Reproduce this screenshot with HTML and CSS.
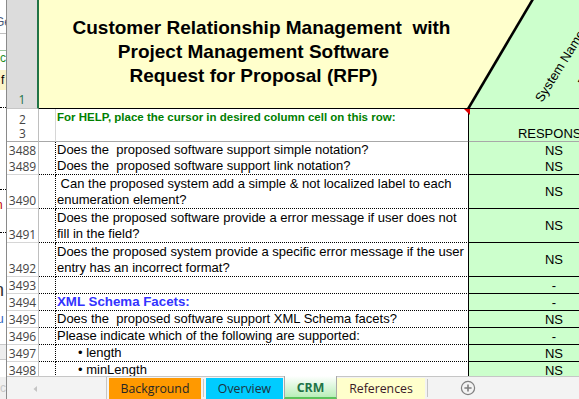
FILE: index.html
```html
<!DOCTYPE html>
<html>
<head>
<meta charset="utf-8">
<title>CRM RFP</title>
<link rel="stylesheet" href="styles.css">
</head>
<body>
<div class="app">
  <div class="strip">
    <div class="s s-a"></div>
    <div class="s s-b">Ge</div>
    <div class="s s-c"></div>
    <div class="s s-d"></div>
    <div class="s s-e">c</div>
    <div class="s s-f"></div>
    <div class="s s-g">f</div>
    <div class="s s-h"></div>
    <div class="s s-i"></div>
    <div class="s s-j"></div>
    <div class="s s-k">n</div>
    <div class="s s-l"></div>
    <div class="s s-m"></div>
    <div class="s s-n">n</div>
    <div class="s s-o"></div>
    <div class="s s-p">u</div>
    <div class="s s-q"></div>
    <div class="s s-r"></div>
    <div class="s s-s"></div>
    <div class="s s-t">c</div>
  </div>
  <div class="main">
    <div class="sheet">
      <div class="row r1">
        <div class="rh sel">1</div>
        <div class="title-cell">
          <svg class="diag" width="600" height="108" viewBox="0 0 600 108">
            <polygon points="0,0 493,0 429,108 0,108" fill="#ffffcc"/>
            <polygon points="493,0 600,0 600,108 429,108" fill="#ccffcc"/>
            <line x1="429" y1="109" x2="494" y2="-1" stroke="#000" stroke-width="2.6"/>
          </svg>
          <div class="title">
            <div class="t1">Customer Relationship Management&nbsp; with</div>
            <div>Project Management Software</div>
            <div>Request for Proposal (RFP)</div>
          </div>
          <div class="rot">
            <div>System Name</div>
            <div class="rot2">Product</div>
          </div>
        </div>
      </div>

      <div class="row r2">
        <div class="rh">2</div>
        <div class="ca"></div>
        <div class="cb help">For HELP, place the cursor in desired column cell on this row:<span class="cmt"></span></div>
        <div class="cc"></div>
      </div>

      <div class="row r3">
        <div class="rh">3</div>
        <div class="ca"></div>
        <div class="cb"></div>
        <div class="cc">RESPONSE</div>
      </div>

      <div class="row q h16">
        <div class="rh">3488</div>
        <div class="ca"></div>
        <div class="cb">Does the&nbsp; proposed software support simple notation?</div>
        <div class="cc">NS</div>
      </div>

      <div class="row q h17">
        <div class="rh">3489</div>
        <div class="ca"></div>
        <div class="cb">Does the&nbsp; proposed software support link notation?</div>
        <div class="cc">NS</div>
      </div>

      <div class="row q h34">
        <div class="rh">3490</div>
        <div class="ca"></div>
        <div class="cb">&nbsp;Can the proposed system add a simple &amp; not localized label to each<br>enumeration element?</div>
        <div class="cc">NS</div>
      </div>

      <div class="row q h34">
        <div class="rh">3491</div>
        <div class="ca"></div>
        <div class="cb">Does the proposed software provide a error message if user does not<br>fill in the field?</div>
        <div class="cc">NS</div>
      </div>

      <div class="row q h34">
        <div class="rh">3492</div>
        <div class="ca"></div>
        <div class="cb">Does the proposed system provide a specific error message if the user<br>entry has an incorrect format?</div>
        <div class="cc">NS</div>
      </div>

      <div class="row q h17">
        <div class="rh">3493</div>
        <div class="ca"></div>
        <div class="cb"></div>
        <div class="cc">-</div>
      </div>

      <div class="row q h17">
        <div class="rh">3494</div>
        <div class="ca"></div>
        <div class="cb facet">XML Schema Facets:</div>
        <div class="cc">-</div>
      </div>

      <div class="row q h17">
        <div class="rh">3495</div>
        <div class="ca"></div>
        <div class="cb">Does the&nbsp; proposed software support XML Schema facets?</div>
        <div class="cc">NS</div>
      </div>

      <div class="row q h17">
        <div class="rh">3496</div>
        <div class="ca"></div>
        <div class="cb">Please indicate which of the following are supported:</div>
        <div class="cc">-</div>
      </div>

      <div class="row q h17">
        <div class="rh">3497</div>
        <div class="ca"></div>
        <div class="cb bullet">• length</div>
        <div class="cc">NS</div>
      </div>

      <div class="row q h17">
        <div class="rh">3498</div>
        <div class="ca"></div>
        <div class="cb bullet">• minLength</div>
        <div class="cc">NS</div>
      </div>
    </div>

    <div class="tabbar">
      <div class="nav">
        <svg width="99" height="22" viewBox="0 0 99 22"><polygon points="30,9 30,15 26.5,12" fill="#c4c4c4"/></svg>
      </div>
      <div class="tabs">
        <div class="tab t-bg">Background</div>
        <span class="sep"></span>
        <div class="tab t-ov">Overview</div>
        <div class="tab t-crm">CRM</div>
        <div class="tab t-ref">References</div>
        <span class="sep sep2"></span>
      </div>
      <div class="add">
        <svg width="16" height="16" viewBox="0 0 16 16">
          <circle cx="8" cy="8" r="6.6" fill="none" stroke="#7f7f7f" stroke-width="1.2"/>
          <path d="M8 4.4 V11.6 M4.4 8 H11.6" stroke="#7f7f7f" stroke-width="1.6"/>
        </svg>
      </div>
    </div>
  </div>
</div>
</body>
</html>
```

FILE: styles.css
```css
* { box-sizing: border-box; }
html, body { margin: 0; padding: 0; }
body {
  width: 579px;
  height: 399px;
  overflow: hidden;
  background: #fff;
  font-family: "Liberation Sans", Arial, sans-serif;
  color: #000;
}
.app { display: flex; height: 399px; }

/* left strip: other window behind */
.strip {
  width: 7px;
  flex: none;
  border-right: 1px solid #8a8a8a;
  overflow: hidden;
  display: flex;
  flex-direction: column;
  font-family: "Liberation Sans", Arial, sans-serif;
  font-size: 12px;
  line-height: 12px;
  white-space: nowrap;
}
.s { flex: none; }
.s-a { height: 16px; }
.s-b { height: 12px; color: #45577a; margin-left: -5px; }
.s-c { height: 6px; border-bottom: 1px solid #c0c0c0; }
.s-d { height: 17px; border-bottom: 1px solid #9cc89c; }
.s-e { height: 15px; color: #1f8f1f; line-height: 15px; }
.s-f { height: 4px; }
.s-g { height: 20px; background: #fbf3c8; line-height: 20px; padding-left: 1px; }
.s-h { height: 18px; border-bottom: 1px dotted #000; }
.s-i { height: 82px; border-bottom: 1px dotted #000; }
.s-j { height: 8px; }
.s-k { height: 14px; color: #c00000; margin-left: -4px; line-height: 14px; }
.s-l { height: 21px; border-bottom: 1px dotted #000; }
.s-m { height: 48px; }
.s-n { height: 18px; font-size: 18px; line-height: 18px; color: #333; margin-left: -6px; }
.s-o { height: 13px; }
.s-p { height: 14px; color: #2a5fc0; line-height: 14px; margin-left: -3px; }
.s-q { height: 19px; border-bottom: 1px solid #c8c8c8; }
.s-r { height: 15px; background: #eeeeee; border-bottom: 1px solid #c8c8c8; }
.s-s { height: 17px; }
.s-t { height: 22px; background: #f0f0f0; color: #c8c8c8; line-height: 22px; }

.main {
  flex: 1;
  min-width: 0;
  display: flex;
  flex-direction: column;
  overflow: hidden;
}
.sheet {
  height: 376px;
  flex: none;
  overflow: hidden;
}

.row {
  display: grid;
  grid-template-columns: 32px 17px 413px 170px;
}
.r1 { grid-template-columns: 32px 600px; height: 109px; }
.r2 { height: 17px; }
.r3 { height: 16px; }
.h16 { height: 16px; }
.h17 { height: 17px; }
.h34 { height: 34px; }

.rh {
  border-right: 1px solid #bfbfbf;
  border-bottom: 1px solid #d6d6d6;
  background: #fff;
  font-family: "Open Sans", "Noto Sans", sans-serif;
  font-size: 12px;
  line-height: 14px;
  color: #444;
  display: flex;
  align-items: flex-end;
  justify-content: center;
  overflow: hidden;
}
.rh.sel {
  background: #dcdcdc;
  color: #217346;
  border-right: 2px solid #217346;
  border-bottom: 1px solid #c6c6c6;
  padding-bottom: 1px;
}

.title-cell {
  position: relative;
  height: 109px;
  border-bottom: 1px solid #000;
  overflow: hidden;
}
.diag { position: absolute; left: 0; top: 0; }
.title {
  position: relative;
  width: 429px;
  padding-top: 16px;
  text-align: center;
  font-weight: bold;
  font-size: 19px;
  line-height: 24px;
  white-space: nowrap;
}
.t1 { padding-left: 16px; }
.rot {
  position: absolute;
  left: 503px;
  top: 91px;
  transform-origin: 0 12px;
  transform: rotate(-58deg);
  font-size: 13px;
  line-height: 15px;
  white-space: nowrap;
}
.rot2 { padding-left: 36px; margin-top: 13px; }

.ca {
  border-right: 1px solid #d6d6d6;
  border-bottom: 1px solid #d6d6d6;
  background: #fff;
}
.cb {
  position: relative;
  border-right: 1px solid #000;
  border-bottom: 1px solid #d6d6d6;
  background: #fff;
  padding-left: 1px;
  display: flex;
  align-items: flex-end;
  font-size: 13px;
  line-height: 16px;
  white-space: nowrap;
}
.cc {
  background: #ccffcc;
  border-bottom: 1px solid #000;
  display: flex;
  align-items: center;
  justify-content: center;
  font-size: 13px;
  line-height: 15px;
  white-space: nowrap;
}

.help {
  color: #008000;
  font-weight: bold;
  font-size: 11.5px;
  padding-bottom: 2px;
}
.cmt {
  position: absolute;
  top: 0;
  right: -2px;
  width: 0;
  height: 0;
  border-top: 6px solid #e00000;
  border-left: 6px solid transparent;
}
.r3 .rh, .r3 .ca, .r3 .cb, .r3 .cc { border-bottom: 2px solid #a8a8a8; }

.q .ca { border-right: 1px dotted #000; border-bottom: 1px dotted #000; }
.q .cb { border-bottom: 1px dotted #000; }

.facet {
  color: #3333ff;
  font-weight: bold;
  font-size: 13.3px;
}
.bullet { padding-left: 22px; }

/* sheet tabs */
.tabbar {
  height: 23px;
  flex: none;
  border-top: 1px solid #c6c6c6;
  background: #f3f3f3;
  display: flex;
  align-items: flex-end;
  font-family: "Open Sans", "Noto Sans", sans-serif;
  font-size: 12.3px;
}
.nav { width: 99px; height: 22px; flex: none; }
.nav svg { display: block; }
.tabs {
  display: flex;
  align-items: flex-end;
  height: 22px;
  border-left: 1px solid #c6c6c6;
  padding-left: 2px;
}
.tab {
  height: 21px;
  display: flex;
  align-items: center;
  justify-content: center;
  color: #262626;
  flex: none;
}
.t-bg { width: 92px; background: #ff9900; }
.sep {
  width: 1px;
  height: 18px;
  background: #c6c6c6;
  margin: 0 2px 2px 2px;
  flex: none;
}
.t-ov { width: 77px; background: #00ccff; color: #1d3340; }
.t-crm {
  width: 53px;
  height: 23px;
  margin-left: 1px;
  border-left: 1px solid #a9a9a9;
  border-right: 1px solid #a9a9a9;
  border-bottom: 2px solid #5cc25c;
  background: linear-gradient(#ffffff, #b9efb9);
  font-weight: bold;
  color: #217346;
  padding-top: 1px;
}
.t-ref { width: 88px; background: #ffffcc; color: #3a1a26; }
.sep2 { margin-left: 2px; }
.add {
  margin-left: 30px;
  height: 22px;
  display: flex;
  align-items: center;
}
.add svg { display: block; }
```
